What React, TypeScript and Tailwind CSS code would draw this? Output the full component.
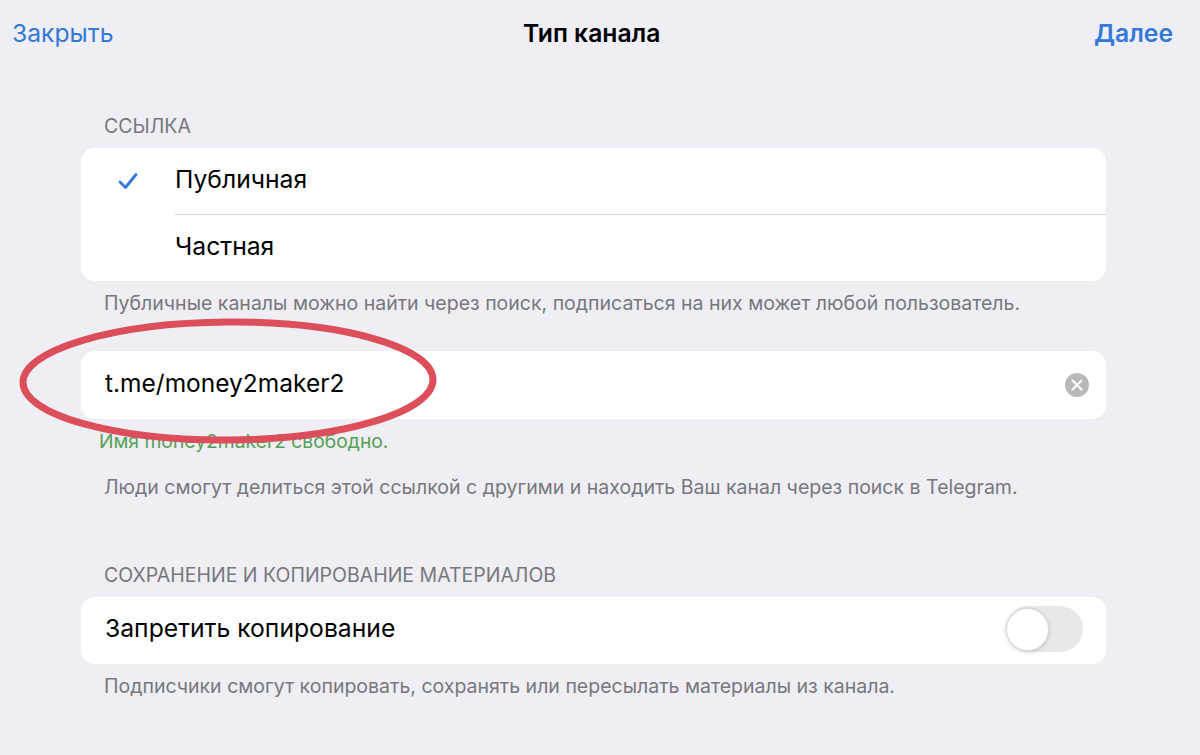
const font = "[font-family:Inter,'Liberation_Sans',sans-serif]";

function SectionTitle({ children }: { children: string }) {
  return <p className="h-[22px] pl-[23px] text-[19.5px] leading-[22px] text-[#77777c]">{children}</p>;
}

function Hint({ children, className = '' }: { children: string; className?: string }) {
  return <p className={`pl-[23px] text-[19.5px] leading-[22px] text-[#77777c] ${className}`}>{children}</p>;
}

export default function App() {
  return (
    <div className={`relative h-[755px] w-[1200px] overflow-hidden bg-[#eeeef4] text-black ${font}`}>
      <header className="flex h-[68px] items-center justify-between pl-[12px] pr-[27px] text-[24.7px]">
        <button className="text-[#3478d8]">Закрыть</button>
        <h1 className="mr-[24px] font-semibold">Тип канала</h1>
        <button className="font-semibold text-[#3478d8]">Далее</button>
      </header>

      <main className="mx-[81px] w-[1025px] pt-[47px]">
        <SectionTitle>ССЫЛКА</SectionTitle>
        <section className="mt-[11px] h-[133px] rounded-[14px] bg-white text-[24.7px]">
          <div className="flex h-[66px] items-center pb-[2px]">
            <div className="flex w-[94px] justify-center">
              <svg width="22" height="18" viewBox="0 0 22 18" fill="none" className="mt-[2px]">
                <path d="M3 10l5.5 5.5L19 2.5" stroke="#3478d8" strokeWidth="2.8" strokeLinecap="round" strokeLinejoin="round" />
              </svg>
            </div>
            <span>Публичная</span>
          </div>
          <div className="ml-[94px] h-px bg-[#d4d4d8]" />
          <div className="flex h-[66px] items-center pb-[2px] pl-[94px]">Частная</div>
        </section>
        <Hint className="mt-[11px]">Публичные каналы можно найти через поиск, подписаться на них может любой пользователь.</Hint>

        <section className="mt-[37px] flex h-[68px] items-center justify-between rounded-[14px] bg-white pl-[24px] pr-[17px] text-[24.5px]">
          <span className="mb-[3px]">t.me/money2maker2</span>
          <span className="flex h-[24px] w-[24px] items-center justify-center rounded-full bg-[#b9b9bb]">
            <svg width="12" height="12" viewBox="0 0 12 12" fill="none">
              <path d="M1.5 1.5l9 9M10.5 1.5l-9 9" stroke="#fff" strokeWidth="2" strokeLinecap="round" />
            </svg>
          </span>
        </section>
        <p className="mt-[11px] pl-[18px] text-[19.3px] leading-[22px] text-[#55a055]">Имя money2maker2 свободно.</p>
        <Hint className="mt-[24px]">Люди смогут делиться этой ссылкой с другими и находить Ваш канал через поиск в Telegram.</Hint>

        <div className="mt-[66px]">
          <SectionTitle>СОХРАНЕНИЕ И КОПИРОВАНИЕ МАТЕРИАЛОВ</SectionTitle>
        </div>
        <section className="mt-[11px] flex h-[67px] items-center justify-between rounded-[14px] bg-white pl-[24px] pr-[23px] text-[24.7px]">
          <span className="mb-[3px]">Запретить копирование</span>
          <span className="mb-[3px] flex h-[46px] w-[77px] items-center rounded-full bg-[#e8e8ea]">
            <span className="h-[43px] w-[43px] rounded-full border border-[#dcdcde] bg-white shadow-[0_1px_4px_rgba(0,0,0,0.18)]" />
          </span>
        </section>
        <Hint className="mt-[11px]">Подписчики смогут копировать, сохранять или пересылать материалы из канала.</Hint>
      </main>

      <svg className="absolute left-0 top-0" width="1200" height="755" fill="none">
        <ellipse cx="228" cy="381" rx="205" ry="59" transform="rotate(-0.4 228 381)" stroke="#dc4e5a" strokeWidth="7" />
      </svg>
    </div>
  );
}
